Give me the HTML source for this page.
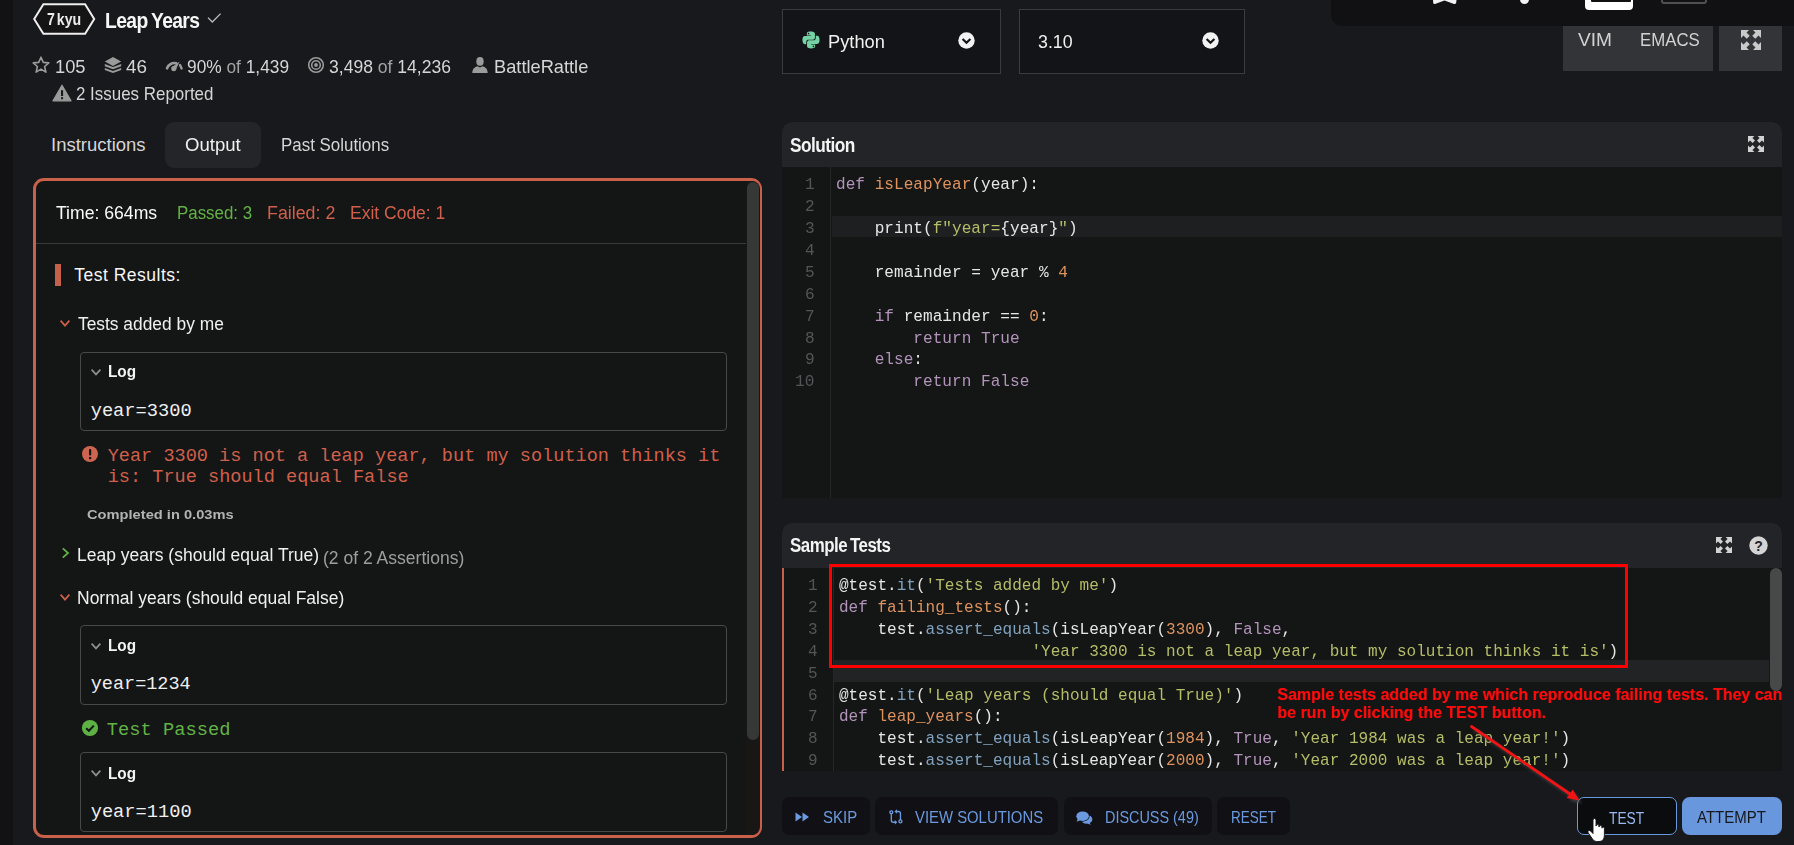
<!DOCTYPE html>
<html><head><meta charset="utf-8">
<style>
*{box-sizing:border-box;margin:0;padding:0}
html,body{width:1794px;height:845px;overflow:hidden;background:#18191d;font-family:"Liberation Sans",sans-serif}
.a{position:absolute;white-space:pre;line-height:1}
</style></head><body>
<div class="a" style="left:0px;top:0px;width:13px;height:845px;background:#121215"></div>
<svg class="a" style="left:32px;top:2px;" width="64" height="34" viewBox="0 0 64 34"><polygon points="2.2,17 11.4,2.2 53.1,2.2 62.2,17 53.1,31.8 11.4,31.8" fill="#151515" stroke="#eeeeee" stroke-width="2"/></svg>
<div class="a" style="left:46.91px;top:12.07px;color:#ececec;font-family:'Liberation Sans',sans-serif;font-size:15.8px;font-weight:bold;transform:scaleX(0.8944);transform-origin:0 0;">7<span style="margin-left:-2.2px"> </span>kyu</div>
<div class="a" style="left:104.94px;top:10.17px;color:#f6f6f6;font-family:'Liberation Sans',sans-serif;font-size:22.5px;font-weight:bold;letter-spacing:-0.7px;transform:scaleX(0.8560);transform-origin:0 0;">Leap<span style="margin-left:-1.2px"> </span>Years</div>
<svg class="a" style="left:206px;top:11.4px;" width="17" height="13" viewBox="0 0 17 13"><path d="M2,6.6 L6.3,11 L14.6,2.6" fill="none" stroke="#bdbdbd" stroke-width="1.3"/></svg>
<svg class="a" style="left:32px;top:56px;" width="18" height="18" viewBox="0 0 18 18"><polygon points="9,1.2 11.3,6.4 16.8,6.9 12.6,10.5 13.9,16.1 9,13.1 4.1,16.1 5.4,10.5 1.2,6.9 6.7,6.4" fill="none" stroke="#9b9b9b" stroke-width="1.6" stroke-linejoin="round"/></svg>
<div class="a" style="left:55.41px;top:58.17px;color:#d6d6d6;font-family:'Liberation Sans',sans-serif;font-size:18.5px;font-weight:normal;transform:scaleX(0.9897);transform-origin:0 0;">105</div>
<svg class="a" style="left:104px;top:56px;" width="18" height="18" viewBox="0 0 18 18"><path d="M9,0.9 L17.2,5.5 L9,9.9 L0.8,5.5Z M0.8,8.1 L9,11.1 L17.2,8.1 L17.2,10.3 L9,13.3 L0.8,10.3Z M0.8,11.9 L9,14.9 L17.2,11.9 L17.2,14.1 L9,17.1 L0.8,14.1Z" fill="#9b9b9b"/></svg>
<div class="a" style="left:126.00px;top:58.17px;color:#d6d6d6;font-family:'Liberation Sans',sans-serif;font-size:18.5px;font-weight:normal;transform:scaleX(1.0200);transform-origin:0 0;">46</div>
<svg class="a" style="left:165px;top:60px;" width="18" height="12" viewBox="0 0 18 12"><g transform="translate(0,1)"><path d="M2,7.3 A8,8 0 0 1 11.3,2.2" fill="none" stroke="#9b9b9b" stroke-width="2.6" stroke-linecap="round"/><circle cx="8.8" cy="7.6" r="2.6" fill="#9b9b9b"/><path d="M6.8,6.2 L14.6,0.6 L10.8,8.8Z" fill="#9b9b9b"/><path d="M15,4 L16.6,7.4" stroke="#9b9b9b" stroke-width="2.4" stroke-linecap="round"/></g></svg>
<div class="a" style="left:187.36px;top:58.17px;color:#d6d6d6;font-family:'Liberation Sans',sans-serif;font-size:18.5px;font-weight:normal;transform:scaleX(0.9355);transform-origin:0 0;">90% <span style="color:#a3a3a3">of</span> 1,439</div>
<svg class="a" style="left:307px;top:56px;" width="18" height="18" viewBox="0 0 18 18"><circle cx="9" cy="9" r="7.3" fill="none" stroke="#9b9b9b" stroke-width="1.6"/><circle cx="9" cy="9" r="4.3" fill="none" stroke="#9b9b9b" stroke-width="1.6"/><circle cx="9" cy="9" r="1.9" fill="#9b9b9b"/></svg>
<div class="a" style="left:329.05px;top:58.17px;color:#d6d6d6;font-family:'Liberation Sans',sans-serif;font-size:18.5px;font-weight:normal;transform:scaleX(0.9488);transform-origin:0 0;">3,498 <span style="color:#a3a3a3">of</span> 14,236</div>
<svg class="a" style="left:471px;top:56px;" width="18" height="18" viewBox="0 0 18 18"><ellipse cx="9" cy="5.4" rx="3.7" ry="4.4" fill="#9b9b9b"/><path d="M1.3,17 C1.3,12.8 4,10.8 6.6,10.3 L9,11.6 L11.4,10.3 C14,10.8 16.7,12.8 16.7,17Z" fill="#9b9b9b"/></svg>
<div class="a" style="left:494.31px;top:58.17px;color:#d6d6d6;font-family:'Liberation Sans',sans-serif;font-size:18.5px;font-weight:normal;transform:scaleX(0.9862);transform-origin:0 0;">BattleRattle</div>
<svg class="a" style="left:52px;top:84px;" width="20" height="18" viewBox="0 0 20 18"><path d="M10,1.2 L19,16.8 L1,16.8Z" fill="#9b9b9b" stroke="#9b9b9b" stroke-width="1.2" stroke-linejoin="round"/><rect x="9" y="6.2" width="2.1" height="5.8" fill="#18191d"/><rect x="9" y="13.2" width="2.1" height="2" fill="#18191d"/></svg>
<div class="a" style="left:75.88px;top:84.98px;color:#d6d6d6;font-family:'Liberation Sans',sans-serif;font-size:18.5px;font-weight:normal;transform:scaleX(0.9155);transform-origin:0 0;">2 Issues Reported</div>
<div class="a" style="left:165px;top:122px;width:96px;height:46px;background:#242529;border-radius:9px"></div>
<div class="a" style="left:51.00px;top:136.28px;color:#d6d6d6;font-family:'Liberation Sans',sans-serif;font-size:18.5px;font-weight:normal;transform:scaleX(1.0000);transform-origin:0 0;">Instructions</div>
<div class="a" style="left:184.50px;top:136.28px;color:#f0f0f0;font-family:'Liberation Sans',sans-serif;font-size:18.5px;font-weight:normal;transform:scaleX(1.0036);transform-origin:0 0;">Output</div>
<div class="a" style="left:281.09px;top:136.28px;color:#d6d6d6;font-family:'Liberation Sans',sans-serif;font-size:18.5px;font-weight:normal;transform:scaleX(0.9145);transform-origin:0 0;">Past Solutions</div>
<div class="a" style="left:33px;top:178px;width:729.4px;height:660px;border:3px solid #c8604a;border-radius:11px;background:#141515"></div>
<div class="a" style="left:36px;top:243px;width:710px;height:1px;background:#393a3a"></div>
<div class="a" style="left:746px;top:181px;width:14px;height:654px;background:#191616;border-radius:0 8px 8px 0"></div>
<div class="a" style="left:747px;top:182px;width:12px;height:558px;background:#363737;border-radius:6px"></div>
<div class="a" style="left:55.70px;top:203.80px;color:#fafafa;font-family:'Liberation Sans',sans-serif;font-size:18px;font-weight:normal;transform:scaleX(0.9786);transform-origin:0 0;">Time: 664ms</div>
<div class="a" style="left:176.66px;top:203.80px;color:#62b346;font-family:'Liberation Sans',sans-serif;font-size:18px;font-weight:normal;transform:scaleX(0.9385);transform-origin:0 0;">Passed: 3</div>
<div class="a" style="left:267.41px;top:203.80px;color:#d0604b;font-family:'Liberation Sans',sans-serif;font-size:18px;font-weight:normal;transform:scaleX(0.9896);transform-origin:0 0;">Failed: 2</div>
<div class="a" style="left:350.03px;top:203.80px;color:#d0604b;font-family:'Liberation Sans',sans-serif;font-size:18px;font-weight:normal;transform:scaleX(0.9719);transform-origin:0 0;">Exit Code: 1</div>
<div class="a" style="left:55px;top:264px;width:6px;height:22px;background:#c5604b"></div>
<div class="a" style="left:74.20px;top:267.12px;color:#f8f8f8;font-family:'Liberation Sans',sans-serif;font-size:17.5px;font-weight:normal;letter-spacing:0.508px;">Test Results:</div>
<svg class="a" style="left:58.8px;top:319px;" width="12" height="8.2" viewBox="0 0 12 8.2"><path d="M1.6,1.6 L6.0,6.6000000000000005 L10.4,1.6" fill="none" stroke="#c8604a" stroke-width="1.8"/></svg>
<div class="a" style="left:77.90px;top:315.92px;color:#f0f0f0;font-family:'Liberation Sans',sans-serif;font-size:17.5px;font-weight:normal;transform:scaleX(0.9925);transform-origin:0 0;">Tests added by me</div>
<div class="a" style="left:80.4px;top:351.5px;width:646.6px;height:79.10000000000002px;border:1px solid #474848;border-radius:4px"></div>
<svg class="a" style="left:90px;top:368.0px;" width="12" height="8" viewBox="0 0 12 8"><path d="M1.6,1.6 L6.0,6.4 L10.4,1.6" fill="none" stroke="#8e8e8e" stroke-width="1.7"/></svg>
<div class="a" style="left:108.03px;top:364.37px;color:#f4f4f4;font-family:'Liberation Sans',sans-serif;font-size:15.8px;font-weight:bold;transform:scaleX(0.9704);transform-origin:0 0;">Log</div>
<div class="a" style="left:90.70px;top:402.19px;color:#f0f0f0;font-family:'Liberation Mono',monospace;font-size:18.701px;font-weight:normal;">year=3300</div>
<svg class="a" style="left:81px;top:445px;" width="18" height="18" viewBox="0 0 18 18"><circle cx="9" cy="9" r="8" fill="#cc6550"/><rect x="8" y="4" width="2.2" height="6.5" rx="1" fill="#151515"/><rect x="8" y="12" width="2.2" height="2.2" fill="#151515"/></svg>
<div class="a" style="left:107.70px;top:447.59px;color:#d0604b;font-family:'Liberation Mono',monospace;font-size:18.57px;font-weight:normal;">Year 3300 is not a leap year, but my solution thinks it</div>
<div class="a" style="left:107.70px;top:469.46px;color:#d0604b;font-family:'Liberation Mono',monospace;font-size:18.599px;font-weight:normal;">is: True should equal False</div>
<div class="a" style="left:86.60px;top:508.42px;color:#b3b3b3;font-family:'Liberation Sans',sans-serif;font-size:13.5px;font-weight:bold;transform:scaleX(1.0859);transform-origin:0 0;">Completed in 0.03ms</div>
<svg class="a" style="left:60.9px;top:547.4px;" width="9" height="12" viewBox="0 0 9 12"><path d="M1.8,1.4 L7,6 L1.8,10.6" fill="none" stroke="#62b346" stroke-width="1.8"/></svg>
<div class="a" style="left:77.20px;top:546.82px;color:#f0f0f0;font-family:'Liberation Sans',sans-serif;font-size:17.5px;font-weight:normal;transform:scaleX(0.9992);transform-origin:0 0;">Leap years (should equal True)</div>
<div class="a" style="left:322.50px;top:549.92px;color:#9e9e9e;font-family:'Liberation Sans',sans-serif;font-size:17.5px;font-weight:normal;transform:scaleX(1.0014);transform-origin:0 0;">(2 of 2 Assertions)</div>
<svg class="a" style="left:59px;top:593px;" width="12" height="8.2" viewBox="0 0 12 8.2"><path d="M1.6,1.6 L6.0,6.6000000000000005 L10.4,1.6" fill="none" stroke="#c8604a" stroke-width="1.8"/></svg>
<div class="a" style="left:77.20px;top:589.92px;color:#f0f0f0;font-family:'Liberation Sans',sans-serif;font-size:17.5px;font-weight:normal;transform:scaleX(0.9992);transform-origin:0 0;">Normal years (should equal False)</div>
<div class="a" style="left:80.4px;top:625.2px;width:646.6px;height:79.39999999999998px;border:1px solid #474848;border-radius:4px"></div>
<svg class="a" style="left:90px;top:641.7px;" width="12" height="8" viewBox="0 0 12 8"><path d="M1.6,1.6 L6.0,6.4 L10.4,1.6" fill="none" stroke="#8e8e8e" stroke-width="1.7"/></svg>
<div class="a" style="left:108.03px;top:638.07px;color:#f4f4f4;font-family:'Liberation Sans',sans-serif;font-size:15.8px;font-weight:bold;transform:scaleX(0.9704);transform-origin:0 0;">Log</div>
<div class="a" style="left:90.70px;top:676.32px;color:#f0f0f0;font-family:'Liberation Mono',monospace;font-size:18.525px;font-weight:normal;">year=1234</div>
<svg class="a" style="left:81px;top:719px;" width="18" height="18" viewBox="0 0 18 18"><circle cx="9" cy="9" r="8.1" fill="#5eb245"/><path d="M5.2,9.2 L7.9,11.8 L12.8,6.6" fill="none" stroke="#151515" stroke-width="2"/></svg>
<div class="a" style="left:106.80px;top:721.35px;color:#62b346;font-family:'Liberation Mono',monospace;font-size:18.745px;font-weight:normal;">Test Passed</div>
<div class="a" style="left:80.4px;top:752.3px;width:646.6px;height:79.70000000000005px;border:1px solid #474848;border-radius:4px"></div>
<svg class="a" style="left:90px;top:768.8px;" width="12" height="8" viewBox="0 0 12 8"><path d="M1.6,1.6 L6.0,6.4 L10.4,1.6" fill="none" stroke="#8e8e8e" stroke-width="1.7"/></svg>
<div class="a" style="left:108.03px;top:765.77px;color:#f4f4f4;font-family:'Liberation Sans',sans-serif;font-size:15.8px;font-weight:bold;transform:scaleX(0.9704);transform-origin:0 0;">Log</div>
<div class="a" style="left:90.70px;top:802.97px;color:#f0f0f0;font-family:'Liberation Mono',monospace;font-size:18.72px;font-weight:normal;">year=1100</div>
<div class="a" style="left:1331px;top:0px;width:463px;height:26px;background:#111114;border-radius:0 0 0 11px"></div>
<svg class="a" style="left:1432px;top:0px;" width="26" height="6" viewBox="0 0 26 6"><path d="M1,0 L1.2,2.8 Q1.5,4.4 3,4 L12.5,0.6 L22,4 Q23.6,4.4 24.2,2.8 L24.5,0 Z" fill="#f2f2f2"/></svg>
<div class="a" style="left:1520px;top:-5px;width:9px;height:9px;background:#f2f2f2;border-radius:50%"></div>
<div class="a" style="left:1585px;top:-6px;width:48px;height:16px;background:#ffffff;border-radius:4px"></div>
<div class="a" style="left:1591px;top:-6px;width:40px;height:8px;background:#111114;border-radius:0 0 1px 1px"></div>
<div class="a" style="left:1661px;top:-6px;width:46px;height:10px;border:2px solid #505050;border-radius:3px"></div>
<div class="a" style="left:782px;top:9px;width:218.5px;height:65px;border:1px solid #3a3b3e;background:#131418"></div>
<svg class="a" style="left:801.8px;top:30.8px;" width="19" height="19" viewBox="0 0 19 19"><g transform="scale(0.9)"><path d="M9.8,0.6 C5,0.6 5.4,2.7 5.4,2.7 L5.4,4.9 L10,4.9 L10,5.6 L3.5,5.6 C3.5,5.6 0.5,5.2 0.5,10 C0.5,14.7 3.1,14.6 3.1,14.6 L4.7,14.6 L4.7,12.3 C4.7,12.3 4.6,9.7 7.3,9.7 L11.9,9.7 C11.9,9.7 14.4,9.7 14.4,7.3 L14.4,3.3 C14.4,3.3 14.8,0.6 9.8,0.6Z M7.3,2 A0.9,0.9 0 1 1 7.3,3.8 A0.9,0.9 0 1 1 7.3,2Z" fill="#74d2a4"/><path d="M10.2,19.4 C15,19.4 14.6,17.3 14.6,17.3 L14.6,15.1 L10,15.1 L10,14.4 L16.5,14.4 C16.5,14.4 19.5,14.8 19.5,10 C19.5,5.3 16.9,5.4 16.9,5.4 L15.3,5.4 L15.3,7.7 C15.3,7.7 15.4,10.3 12.7,10.3 L8.1,10.3 C8.1,10.3 5.6,10.3 5.6,12.7 L5.6,16.7 C5.6,16.7 5.2,19.4 10.2,19.4Z M12.7,18 A0.9,0.9 0 1 1 12.7,16.2 A0.9,0.9 0 1 1 12.7,18Z" fill="#74d2a4"/></g></svg>
<div class="a" style="left:828.24px;top:31.75px;color:#f0f0f0;font-family:'Liberation Sans',sans-serif;font-size:19px;font-weight:normal;transform:scaleX(0.9614);transform-origin:0 0;">Python</div>
<svg class="a" style="left:958.3px;top:31.6px;" width="17" height="17" viewBox="0 0 17 17"><circle cx="8.5" cy="8.5" r="8.2" fill="#f2f2f2"/><path d="M4.6,7 L8.5,10.8 L12.4,7" fill="none" stroke="#151518" stroke-width="2.2"/></svg>
<div class="a" style="left:1019px;top:9px;width:225.5px;height:65px;border:1px solid #3a3b3e;background:#131418"></div>
<div class="a" style="left:1038.46px;top:31.75px;color:#f0f0f0;font-family:'Liberation Sans',sans-serif;font-size:19px;font-weight:normal;transform:scaleX(0.9361);transform-origin:0 0;">3.10</div>
<svg class="a" style="left:1202.3px;top:31.6px;" width="17" height="17" viewBox="0 0 17 17"><circle cx="8.5" cy="8.5" r="8.2" fill="#f2f2f2"/><path d="M4.6,7 L8.5,10.8 L12.4,7" fill="none" stroke="#151518" stroke-width="2.2"/></svg>
<div class="a" style="left:1563px;top:26px;width:150px;height:45px;background:#333438"></div>
<div class="a" style="left:1719px;top:26px;width:63px;height:45px;background:#333438"></div>
<div class="a" style="left:1577.90px;top:31.07px;color:#d2d2d2;font-family:'Liberation Sans',sans-serif;font-size:18.5px;font-weight:normal;transform:scaleX(1.0344);transform-origin:0 0;">VIM</div>
<div class="a" style="left:1639.99px;top:31.07px;color:#d2d2d2;font-family:'Liberation Sans',sans-serif;font-size:18.5px;font-weight:normal;transform:scaleX(0.9078);transform-origin:0 0;">EMACS</div>
<svg class="a" style="left:1741px;top:30px;" width="20" height="20" viewBox="0 0 20 20"><g transform="scale(1.25)" fill="#c9c9c9"><path d="M0,0 L6.4,0 L4.4,2 L7,4.6 L4.6,7 L2,4.4 L0,6.4Z"/><path d="M16,0 L9.6,0 L11.6,2 L9,4.6 L11.4,7 L14,4.4 L16,6.4Z"/><path d="M0,16 L6.4,16 L4.4,14 L7,11.4 L4.6,9 L2,11.6 L0,9.6Z"/><path d="M16,16 L9.6,16 L11.6,14 L9,11.4 L11.4,9 L14,11.6 L16,9.6Z"/></g></svg>
<div class="a" style="left:782px;top:122px;width:1000px;height:375.6px;background:#141515;border-radius:10px 10px 0 0;overflow:hidden"></div>
<div class="a" style="left:782px;top:122px;width:1000px;height:45px;background:#232428;border-radius:10px 10px 0 0"></div>
<div class="a" style="left:790.31px;top:135.83px;color:#f4f4f4;font-family:'Liberation Sans',sans-serif;font-size:19.5px;font-weight:bold;letter-spacing:-0.6px;transform:scaleX(0.8861);transform-origin:0 0;">Solution</div>
<svg class="a" style="left:1748px;top:136px;" width="16" height="16" viewBox="0 0 16 16"><g transform="scale(1.0)" fill="#d2d2d2"><path d="M0,0 L6.4,0 L4.4,2 L7,4.6 L4.6,7 L2,4.4 L0,6.4Z"/><path d="M16,0 L9.6,0 L11.6,2 L9,4.6 L11.4,7 L14,4.4 L16,6.4Z"/><path d="M0,16 L6.4,16 L4.4,14 L7,11.4 L4.6,9 L2,11.6 L0,9.6Z"/><path d="M16,16 L9.6,16 L11.6,14 L9,11.4 L11.4,9 L14,11.6 L16,9.6Z"/></g></svg>
<div class="a" style="left:830px;top:167px;width:1px;height:330.6px;background:#262728"></div>
<div class="a" style="left:832px;top:216.2px;width:950px;height:20.80000000000001px;background:#1e1f20"></div>
<div class="a" style="left:804.83px;top:176.43px;color:#545556;font-family:'Liberation Mono',monospace;font-size:17.2px;font-weight:normal;transform:scaleX(0.9370);transform-origin:0 0;">1</div>
<div class="a" style="left:836.20px;top:176.43px;color:#e6e6e6;font-family:'Liberation Mono',monospace;font-size:17.2px;font-weight:normal;transform:scaleX(0.9370);transform-origin:0 0;"><span style="color:#b294bb">def</span><span style="color:#e6e6e6"> </span><span style="color:#de935f">isLeapYear</span><span style="color:#e6e6e6">(year):</span></div>
<div class="a" style="left:804.83px;top:198.30px;color:#545556;font-family:'Liberation Mono',monospace;font-size:17.2px;font-weight:normal;transform:scaleX(0.9370);transform-origin:0 0;">2</div>
<div class="a" style="left:804.83px;top:220.18px;color:#545556;font-family:'Liberation Mono',monospace;font-size:17.2px;font-weight:normal;transform:scaleX(0.9370);transform-origin:0 0;">3</div>
<div class="a" style="left:836.20px;top:220.18px;color:#e6e6e6;font-family:'Liberation Mono',monospace;font-size:17.2px;font-weight:normal;transform:scaleX(0.9370);transform-origin:0 0;"><span style="color:#e6e6e6">    print(</span><span style="color:#b5bd68">f&quot;year=</span><span style="color:#e6e6e6">{year}</span><span style="color:#b5bd68">&quot;</span><span style="color:#e6e6e6">)</span></div>
<div class="a" style="left:804.83px;top:242.05px;color:#545556;font-family:'Liberation Mono',monospace;font-size:17.2px;font-weight:normal;transform:scaleX(0.9370);transform-origin:0 0;">4</div>
<div class="a" style="left:804.83px;top:263.93px;color:#545556;font-family:'Liberation Mono',monospace;font-size:17.2px;font-weight:normal;transform:scaleX(0.9370);transform-origin:0 0;">5</div>
<div class="a" style="left:836.20px;top:263.93px;color:#e6e6e6;font-family:'Liberation Mono',monospace;font-size:17.2px;font-weight:normal;transform:scaleX(0.9370);transform-origin:0 0;"><span style="color:#e6e6e6">    remainder = year % </span><span style="color:#de935f">4</span></div>
<div class="a" style="left:804.83px;top:285.80px;color:#545556;font-family:'Liberation Mono',monospace;font-size:17.2px;font-weight:normal;transform:scaleX(0.9370);transform-origin:0 0;">6</div>
<div class="a" style="left:804.83px;top:307.68px;color:#545556;font-family:'Liberation Mono',monospace;font-size:17.2px;font-weight:normal;transform:scaleX(0.9370);transform-origin:0 0;">7</div>
<div class="a" style="left:836.20px;top:307.68px;color:#e6e6e6;font-family:'Liberation Mono',monospace;font-size:17.2px;font-weight:normal;transform:scaleX(0.9370);transform-origin:0 0;"><span style="color:#e6e6e6">    </span><span style="color:#b294bb">if</span><span style="color:#e6e6e6"> remainder == </span><span style="color:#de935f">0</span><span style="color:#e6e6e6">:</span></div>
<div class="a" style="left:804.83px;top:329.55px;color:#545556;font-family:'Liberation Mono',monospace;font-size:17.2px;font-weight:normal;transform:scaleX(0.9370);transform-origin:0 0;">8</div>
<div class="a" style="left:836.20px;top:329.55px;color:#e6e6e6;font-family:'Liberation Mono',monospace;font-size:17.2px;font-weight:normal;transform:scaleX(0.9370);transform-origin:0 0;"><span style="color:#e6e6e6">        </span><span style="color:#b294bb">return True</span></div>
<div class="a" style="left:804.83px;top:351.43px;color:#545556;font-family:'Liberation Mono',monospace;font-size:17.2px;font-weight:normal;transform:scaleX(0.9370);transform-origin:0 0;">9</div>
<div class="a" style="left:836.20px;top:351.43px;color:#e6e6e6;font-family:'Liberation Mono',monospace;font-size:17.2px;font-weight:normal;transform:scaleX(0.9370);transform-origin:0 0;"><span style="color:#e6e6e6">    </span><span style="color:#b294bb">else</span><span style="color:#e6e6e6">:</span></div>
<div class="a" style="left:795.16px;top:373.30px;color:#545556;font-family:'Liberation Mono',monospace;font-size:17.2px;font-weight:normal;transform:scaleX(0.9370);transform-origin:0 0;">10</div>
<div class="a" style="left:836.20px;top:373.30px;color:#e6e6e6;font-family:'Liberation Mono',monospace;font-size:17.2px;font-weight:normal;transform:scaleX(0.9370);transform-origin:0 0;"><span style="color:#e6e6e6">        </span><span style="color:#b294bb">return False</span></div>
<div class="a" style="left:782px;top:523px;width:1000px;height:248.20000000000005px;background:#141515;border-radius:10px 10px 0 0"></div>
<div class="a" style="left:782px;top:523px;width:1000px;height:45px;background:#232428;border-radius:10px 10px 0 0"></div>
<div class="a" style="left:790.43px;top:536.42px;color:#f4f4f4;font-family:'Liberation Sans',sans-serif;font-size:19.5px;font-weight:bold;letter-spacing:-0.6px;transform:scaleX(0.8675);transform-origin:0 0;">Sample<span style="margin-left:-1.5px"> </span>Tests</div>
<svg class="a" style="left:1715.5px;top:537px;" width="16" height="16" viewBox="0 0 16 16"><g transform="scale(1.0)" fill="#d2d2d2"><path d="M0,0 L6.4,0 L4.4,2 L7,4.6 L4.6,7 L2,4.4 L0,6.4Z"/><path d="M16,0 L9.6,0 L11.6,2 L9,4.6 L11.4,7 L14,4.4 L16,6.4Z"/><path d="M0,16 L6.4,16 L4.4,14 L7,11.4 L4.6,9 L2,11.6 L0,9.6Z"/><path d="M16,16 L9.6,16 L11.6,14 L9,11.4 L11.4,9 L14,11.6 L16,9.6Z"/></g></svg>
<svg class="a" style="left:1748.5px;top:535.8px;" width="19" height="19" viewBox="0 0 19 19"><circle cx="9.5" cy="9.5" r="9.2" fill="#d4d4d4"/><text x="9.5" y="14.6" text-anchor="middle" font-family="Liberation Sans" font-weight="bold" font-size="14" fill="#232428">?</text></svg>
<div class="a" style="left:782px;top:568px;width:2px;height:203.20000000000005px;background:#c8604a"></div>
<div class="a" style="left:833px;top:567px;width:1px;height:204.20000000000005px;background:#262728"></div>
<div class="a" style="left:834px;top:660px;width:935px;height:22px;background:#222324"></div>
<div class="a" style="left:1770px;top:568px;width:12px;height:123px;background:#474848;border-radius:6px"></div>
<div class="a" style="left:807.55px;top:577.13px;color:#545556;font-family:'Liberation Mono',monospace;font-size:17.2px;font-weight:normal;transform:scaleX(0.9327);transform-origin:0 0;">1</div>
<div class="a" style="left:838.80px;top:577.13px;color:#e6e6e6;font-family:'Liberation Mono',monospace;font-size:17.2px;font-weight:normal;transform:scaleX(0.9327);transform-origin:0 0;"><span style="color:#e6e6e6">@test.</span><span style="color:#81a2be">it</span><span style="color:#e6e6e6">(</span><span style="color:#b5bd68">&#x27;Tests added by me&#x27;</span><span style="color:#e6e6e6">)</span></div>
<div class="a" style="left:807.55px;top:599.00px;color:#545556;font-family:'Liberation Mono',monospace;font-size:17.2px;font-weight:normal;transform:scaleX(0.9327);transform-origin:0 0;">2</div>
<div class="a" style="left:838.80px;top:599.00px;color:#e6e6e6;font-family:'Liberation Mono',monospace;font-size:17.2px;font-weight:normal;transform:scaleX(0.9327);transform-origin:0 0;"><span style="color:#b294bb">def</span><span style="color:#e6e6e6"> </span><span style="color:#de935f">failing_tests</span><span style="color:#e6e6e6">():</span></div>
<div class="a" style="left:807.55px;top:620.88px;color:#545556;font-family:'Liberation Mono',monospace;font-size:17.2px;font-weight:normal;transform:scaleX(0.9327);transform-origin:0 0;">3</div>
<div class="a" style="left:838.80px;top:620.88px;color:#e6e6e6;font-family:'Liberation Mono',monospace;font-size:17.2px;font-weight:normal;transform:scaleX(0.9327);transform-origin:0 0;"><span style="color:#e6e6e6">    test.</span><span style="color:#81a2be">assert_equals</span><span style="color:#e6e6e6">(isLeapYear(</span><span style="color:#de935f">3300</span><span style="color:#e6e6e6">), </span><span style="color:#b294bb">False</span><span style="color:#e6e6e6">,</span></div>
<div class="a" style="left:807.55px;top:642.75px;color:#545556;font-family:'Liberation Mono',monospace;font-size:17.2px;font-weight:normal;transform:scaleX(0.9327);transform-origin:0 0;">4</div>
<div class="a" style="left:838.80px;top:642.75px;color:#e6e6e6;font-family:'Liberation Mono',monospace;font-size:17.2px;font-weight:normal;transform:scaleX(0.9327);transform-origin:0 0;"><span style="color:#e6e6e6">                    </span><span style="color:#b5bd68">&#x27;Year 3300 is not a leap year, but my solution thinks it is&#x27;</span><span style="color:#e6e6e6">)</span></div>
<div class="a" style="left:807.55px;top:664.63px;color:#545556;font-family:'Liberation Mono',monospace;font-size:17.2px;font-weight:normal;transform:scaleX(0.9327);transform-origin:0 0;">5</div>
<div class="a" style="left:807.55px;top:686.50px;color:#545556;font-family:'Liberation Mono',monospace;font-size:17.2px;font-weight:normal;transform:scaleX(0.9327);transform-origin:0 0;">6</div>
<div class="a" style="left:838.80px;top:686.50px;color:#e6e6e6;font-family:'Liberation Mono',monospace;font-size:17.2px;font-weight:normal;transform:scaleX(0.9327);transform-origin:0 0;"><span style="color:#e6e6e6">@test.</span><span style="color:#81a2be">it</span><span style="color:#e6e6e6">(</span><span style="color:#b5bd68">&#x27;Leap years (should equal True)&#x27;</span><span style="color:#e6e6e6">)</span></div>
<div class="a" style="left:807.55px;top:708.38px;color:#545556;font-family:'Liberation Mono',monospace;font-size:17.2px;font-weight:normal;transform:scaleX(0.9327);transform-origin:0 0;">7</div>
<div class="a" style="left:838.80px;top:708.38px;color:#e6e6e6;font-family:'Liberation Mono',monospace;font-size:17.2px;font-weight:normal;transform:scaleX(0.9327);transform-origin:0 0;"><span style="color:#b294bb">def</span><span style="color:#e6e6e6"> </span><span style="color:#de935f">leap_years</span><span style="color:#e6e6e6">():</span></div>
<div class="a" style="left:807.55px;top:730.25px;color:#545556;font-family:'Liberation Mono',monospace;font-size:17.2px;font-weight:normal;transform:scaleX(0.9327);transform-origin:0 0;">8</div>
<div class="a" style="left:838.80px;top:730.25px;color:#e6e6e6;font-family:'Liberation Mono',monospace;font-size:17.2px;font-weight:normal;transform:scaleX(0.9327);transform-origin:0 0;"><span style="color:#e6e6e6">    test.</span><span style="color:#81a2be">assert_equals</span><span style="color:#e6e6e6">(isLeapYear(</span><span style="color:#de935f">1984</span><span style="color:#e6e6e6">), </span><span style="color:#b294bb">True</span><span style="color:#e6e6e6">, </span><span style="color:#b5bd68">&#x27;Year 1984 was a leap year!&#x27;</span><span style="color:#e6e6e6">)</span></div>
<div class="a" style="left:807.55px;top:752.13px;color:#545556;font-family:'Liberation Mono',monospace;font-size:17.2px;font-weight:normal;transform:scaleX(0.9327);transform-origin:0 0;">9</div>
<div class="a" style="left:838.80px;top:752.13px;color:#e6e6e6;font-family:'Liberation Mono',monospace;font-size:17.2px;font-weight:normal;transform:scaleX(0.9327);transform-origin:0 0;"><span style="color:#e6e6e6">    test.</span><span style="color:#81a2be">assert_equals</span><span style="color:#e6e6e6">(isLeapYear(</span><span style="color:#de935f">2000</span><span style="color:#e6e6e6">), </span><span style="color:#b294bb">True</span><span style="color:#e6e6e6">, </span><span style="color:#b5bd68">&#x27;Year 2000 was a leap year!&#x27;</span><span style="color:#e6e6e6">)</span></div>
<div class="a" style="left:829px;top:563.8px;width:799.4000000000001px;height:103.80000000000007px;border:3.4px solid #ff0000"></div>
<div class="a" style="left:1277.00px;top:686.90px;color:#ff0a0a;font-family:'Liberation Sans',sans-serif;font-size:16px;font-weight:bold;letter-spacing:0.000px;">Sample tests added by me which reproduce failing tests. They can</div>
<div class="a" style="left:1277.00px;top:705.00px;color:#ff0a0a;font-family:'Liberation Sans',sans-serif;font-size:16px;font-weight:bold;letter-spacing:0.006px;">be run by clicking the TEST button.</div>
<div class="a" style="left:782px;top:797.3px;width:88px;height:37.30000000000007px;background:#111115;border-radius:7px"></div>
<svg class="a" style="left:795px;top:812px;" width="15" height="10" viewBox="0 0 15 10"><path d="M0.5,0.5 L7,5 L0.5,9.5Z M7.5,0.5 L14,5 L7.5,9.5Z" fill="#6b9ae0"/></svg>
<div class="a" style="left:823.07px;top:809.43px;color:#6b9ae0;font-family:'Liberation Sans',sans-serif;font-size:16.2px;font-weight:normal;transform:scaleX(0.9257);transform-origin:0 0;">SKIP</div>
<div class="a" style="left:875px;top:797.3px;width:183px;height:37.30000000000007px;background:#111115;border-radius:7px"></div>
<svg class="a" style="left:887.9px;top:808.7px;" width="17" height="17" viewBox="0 0 17 17"><g transform="scale(0.83)"><g fill="none" stroke="#6b9ae0" stroke-width="1.6"><circle cx="4" cy="4" r="1.8"/><path d="M4,5.8 L4,13.5 Q4,16 6.5,16 L8.5,16"/><circle cx="15" cy="15" r="1.8"/><path d="M15,13.2 L15,5.5 Q15,3 12.5,3 L10.5,3"/></g><path d="M8.2,13.4 L11.2,16 L8.2,18.6Z M10.8,0.4 L7.8,3 L10.8,5.6Z" fill="#6b9ae0"/></g></svg>
<div class="a" style="left:915.40px;top:809.43px;color:#6b9ae0;font-family:'Liberation Sans',sans-serif;font-size:16.2px;font-weight:normal;transform:scaleX(0.9187);transform-origin:0 0;">VIEW SOLUTIONS</div>
<div class="a" style="left:1063.5px;top:797.3px;width:148.5px;height:37.30000000000007px;background:#111115;border-radius:7px"></div>
<svg class="a" style="left:1076px;top:810.5px;" width="17" height="14" viewBox="0 0 17 14"><ellipse cx="6.6" cy="5.2" rx="6.3" ry="4.8" fill="#6b9ae0"/><path d="M1.8,7.5 L0.6,10.8 L5,9" fill="#6b9ae0"/><path d="M13.6,4.6 C15.6,5.6 16.6,7.2 16.3,9 C16,10.6 14.8,11.6 13.6,12 L15,13.8 L10.8,12.6 C8.6,12.8 6.8,12 6,10.8 C10,10.8 13.8,8.6 13.6,4.6Z" fill="#6b9ae0"/></svg>
<div class="a" style="left:1104.91px;top:809.33px;color:#6b9ae0;font-family:'Liberation Sans',sans-serif;font-size:16.2px;font-weight:normal;transform:scaleX(0.8903);transform-origin:0 0;">DISCUSS (49)</div>
<div class="a" style="left:1217.3px;top:797.3px;width:72.70000000000005px;height:37.30000000000007px;background:#111115;border-radius:7px"></div>
<div class="a" style="left:1230.67px;top:808.73px;color:#6b9ae0;font-family:'Liberation Sans',sans-serif;font-size:16.2px;font-weight:normal;transform:scaleX(0.8321);transform-origin:0 0;">RESET</div>
<div class="a" style="left:1577px;top:797.3px;width:100px;height:37.5px;background:#0b0c0d;border:1.5px solid #6a98de;border-radius:7px"></div>
<div class="a" style="left:1609.00px;top:809.64px;color:#98b9ee;font-family:'Liberation Sans',sans-serif;font-size:16.3px;font-weight:normal;transform:scaleX(0.8452);transform-origin:0 0;">TEST</div>
<div class="a" style="left:1682px;top:797px;width:100px;height:38px;background:#6897dd;border-radius:8px"></div>
<div class="a" style="left:1697.30px;top:809.13px;color:#16171b;font-family:'Liberation Sans',sans-serif;font-size:16.2px;font-weight:normal;transform:scaleX(0.9270);transform-origin:0 0;">ATTEMPT</div>
<svg class="a" style="left:1460px;top:715px;z-index:5" width="140" height="100" viewBox="0 0 140 100"><defs><filter id="sh" x="-30%" y="-30%" width="160%" height="160%"><feGaussianBlur stdDeviation="1.5"/></filter></defs><g transform="translate(2.5,3)" opacity="0.5" filter="url(#sh)"><path d="M11.5,11.5 L110,79" stroke="#555" stroke-width="3"/><path d="M119.5,85.5 L107.4,82.4 L112.4,75.7Z" fill="#666"/></g><path d="M11.5,11.5 L110,79" stroke="#f01414" stroke-width="2.8" stroke-linecap="round"/><path d="M119.5,85.5 L106.6,83 L112.8,74.6Z" fill="#f01414"/></svg>
<svg class="a" style="left:1586px;top:817px;z-index:6" width="22" height="27" viewBox="0 0 22 27"><path d="M7,3 Q7,1.5 8.5,1.5 Q10,1.5 10,3 L10,9 Q10,7.6 11.5,7.6 Q13,7.6 13,9 L13,10 Q13,8.6 14.5,8.6 Q16,8.6 16,10 L16,11.2 Q16,10 17.2,10 Q18.4,10 18.4,11.5 L18.4,18 Q18.4,24.5 13,24.5 L10.5,24.5 Q8,24.5 6.5,22 L2.2,15.8 Q1.4,14.5 2.6,13.7 Q3.6,13.1 4.6,14.1 L7,16.5 Z" fill="#ffffff" stroke="#111" stroke-width="0.9"/></svg>
</body></html>
